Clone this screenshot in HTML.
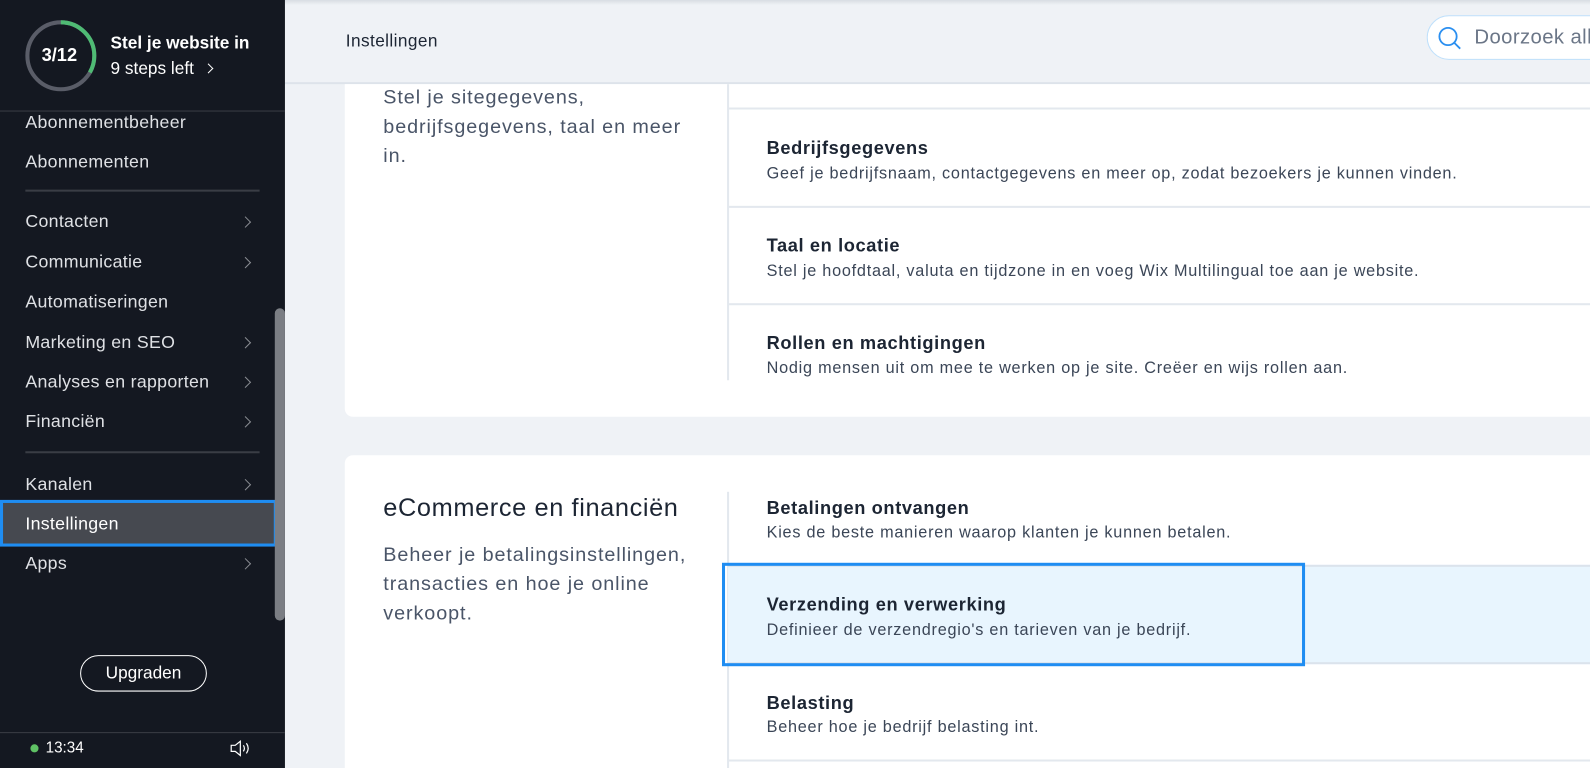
<!DOCTYPE html>
<html><head><meta charset="utf-8"><style>
*{margin:0;padding:0;box-sizing:border-box}
html,body{width:1590px;height:768px;overflow:hidden;background:#eff2f6}
#o{position:relative;width:1590px;height:768px;overflow:hidden}
#w{position:absolute;left:0;top:0;width:1568px;height:757px;transform:scale(1.01403);transform-origin:0 0;font-family:"Liberation Sans",sans-serif}
.a{position:absolute;white-space:nowrap}
#sb{position:absolute;left:0;top:0;width:281px;height:768px;background:#141821}
.ni{position:absolute;left:25px;font-size:17.5px;letter-spacing:0.3px;color:#dfe1e5}
.ch{position:absolute;left:238px;width:8px;height:8px;border-right:1.5px solid #8a8d93;border-top:1.5px solid #8a8d93;transform:rotate(45deg)}
.hr{position:absolute;left:25px;width:231px;height:2px;background:#3a3d45}
.card{position:absolute;left:340px;width:1250px;background:#fff;border-radius:8px}
.t{position:absolute;left:756px;font-size:18px;letter-spacing:0.6px;font-weight:bold;color:#1c2533}
.d{position:absolute;left:756px;font-size:16px;letter-spacing:0.75px;color:#3b4657}
.sep{position:absolute;left:718px;width:872px;height:2px;background:#e3e8ee}
.ld{position:absolute;left:378px;font-size:19.5px;letter-spacing:0.9px;color:#4a5568;line-height:29px}
</style></head><body><div id="o"><div id="w">
<div class="a" style="left:281px;top:0;width:1309px;height:5px;background:linear-gradient(#d8dde3,#eff2f6)"></div>
<div class="a" style="left:341px;top:31px;font-size:17px;letter-spacing:0.4px;color:#1c2533">Instellingen</div>
<div class="a" style="left:1407px;top:15px;width:200px;height:44px;border:1.5px solid #bfe0fb;border-radius:22px;background:#fff"></div>
<svg class="a" style="left:1417px;top:25px" width="26" height="26" viewBox="0 0 26 26"><circle cx="11" cy="11" r="8.5" fill="none" stroke="#2b8ff0" stroke-width="1.8"/><line x1="17" y1="17" x2="23" y2="23" stroke="#2b8ff0" stroke-width="1.8"/></svg>
<div class="a" style="left:1454px;top:26px;font-size:20px;letter-spacing:0.4px;color:#6b7687">Doorzoek alle</div>
<div class="a" style="left:281px;top:81px;width:1309px;height:2px;background:#dde3ea"></div>

<div class="card" style="top:83px;height:328px;border-radius:0 0 8px 8px"></div>
<div class="a" style="left:717px;top:83px;width:2px;height:292px;background:#e3e8ee"></div>
<div class="ld" style="top:82px">Stel je sitegegevens,<br>bedrijfsgegevens, taal en meer<br>in.</div>
<div class="sep" style="top:106px"></div>
<div class="t" style="top:136px">Bedrijfsgegevens</div>
<div class="d" style="top:163px">Geef je bedrijfsnaam, contactgegevens en meer op, zodat bezoekers je kunnen vinden.</div>
<div class="sep" style="top:203px"></div>
<div class="t" style="top:232px">Taal en locatie</div>
<div class="d" style="top:259px">Stel je hoofdtaal, valuta en tijdzone in en voeg Wix Multilingual toe aan je website.</div>
<div class="sep" style="top:299px"></div>
<div class="t" style="top:328px">Rollen en machtigingen</div>
<div class="d" style="top:355px">Nodig mensen uit om mee te werken op je site. Creëer en wijs rollen aan.</div>

<div class="card" style="top:449px;height:330px"></div>
<div class="a" style="left:717px;top:485px;width:2px;height:283px;background:#e3e8ee"></div>
<div class="a" style="left:378px;top:487px;font-size:25px;letter-spacing:0.6px;color:#1c2533">eCommerce en financiën</div>
<div class="ld" style="top:533px">Beheer je betalingsinstellingen,<br>transacties en hoe je online<br>verkoopt.</div>
<div class="t" style="top:491px">Betalingen ontvangen</div>
<div class="d" style="top:517px">Kies de beste manieren waarop klanten je kunnen betalen.</div>
<div class="a" style="left:718px;top:557px;width:872px;height:98px;background:#e8f5fe;border-top:2px solid #dbe3ec;border-bottom:2px solid #dbe3ec"></div>
<div class="a" style="left:712px;top:555px;width:575px;height:102px;border:3px solid #1f8df2"></div>
<div class="t" style="top:586px">Verzending en verwerking</div>
<div class="d" style="top:613px">Definieer de verzendregio's en tarieven van je bedrijf.</div>
<div class="t" style="top:683px">Belasting</div>
<div class="d" style="top:709px">Beheer hoe je bedrijf belasting int.</div>
<div class="sep" style="top:749px"></div>

<div id="sb">
<svg class="a" style="left:24px;top:19px" width="72" height="72" viewBox="0 0 72 72"><circle cx="36" cy="36" r="33" fill="none" stroke="#5a5d68" stroke-width="4"/><circle cx="36" cy="36" r="33" fill="none" stroke="#4fbb74" stroke-width="4" stroke-dasharray="69 208" transform="rotate(-90 36 36)"/></svg>
<div class="a" style="left:41px;top:44px;font-size:18px;font-weight:bold;color:#fff">3/12</div>
<div class="a" style="left:109px;top:33px;font-size:17px;font-weight:bold;color:#fff">Stel je website in</div>
<div class="a" style="left:109px;top:58px;font-size:17px;color:#fff">9 steps left</div>
<div class="ch" style="left:202px;top:64px;border-color:#fff;width:7px;height:7px"></div>
<div class="a" style="left:0;top:109px;width:281px;height:1px;background:#3a3d45"></div>
<div class="ni" style="top:110px">Abonnementbeheer</div>
<div class="ni" style="top:149px">Abonnementen</div>
<div class="hr" style="top:187px"></div>
<div class="ni" style="top:208px">Contacten</div><div class="ch" style="top:215px"></div>
<div class="ni" style="top:248px">Communicatie</div><div class="ch" style="top:255px"></div>
<div class="ni" style="top:287px">Automatiseringen</div>
<div class="ni" style="top:327px">Marketing en SEO</div><div class="ch" style="top:334px"></div>
<div class="ni" style="top:366px">Analyses en rapporten</div><div class="ch" style="top:373px"></div>
<div class="ni" style="top:405px">Financiën</div><div class="ch" style="top:412px"></div>
<div class="hr" style="top:445px"></div>
<div class="ni" style="top:467px">Kanalen</div><div class="ch" style="top:474px"></div>
<div class="a" style="left:0;top:493px;width:273px;height:46px;background:#464950;border:3px solid #1f8df2"></div>
<div class="ni" style="top:506px;color:#fff">Instellingen</div>
<div class="ni" style="top:545px">Apps</div><div class="ch" style="top:552px"></div>
<div class="a" style="left:271px;top:304px;width:10px;height:308px;background:#7b7e84;border-radius:5px"></div>
<div class="a" style="left:79px;top:646px;width:125px;height:36px;border:1.5px solid #fff;border-radius:18px;color:#fff;font-size:17px;text-align:center;line-height:33px">Upgraden</div>
<div class="a" style="left:0;top:722px;width:281px;height:1px;background:#3a3d45"></div>
<div class="a" style="left:30px;top:734px;width:8px;height:8px;border-radius:50%;background:#5fc265"></div>
<div class="a" style="left:45px;top:729px;font-size:15px;color:#fff">13:34</div>
<svg class="a" style="left:226px;top:729px" width="22" height="18" viewBox="0 0 22 18"><path d="M2 6h4l5-4v14l-5-4H2z" fill="none" stroke="#fff" stroke-width="1.2"/><path d="M14 6q2 3 0 6M17 4q3.5 5 0 10" fill="none" stroke="#fff" stroke-width="1.2"/></svg>
</div>
</div></div></body></html>
